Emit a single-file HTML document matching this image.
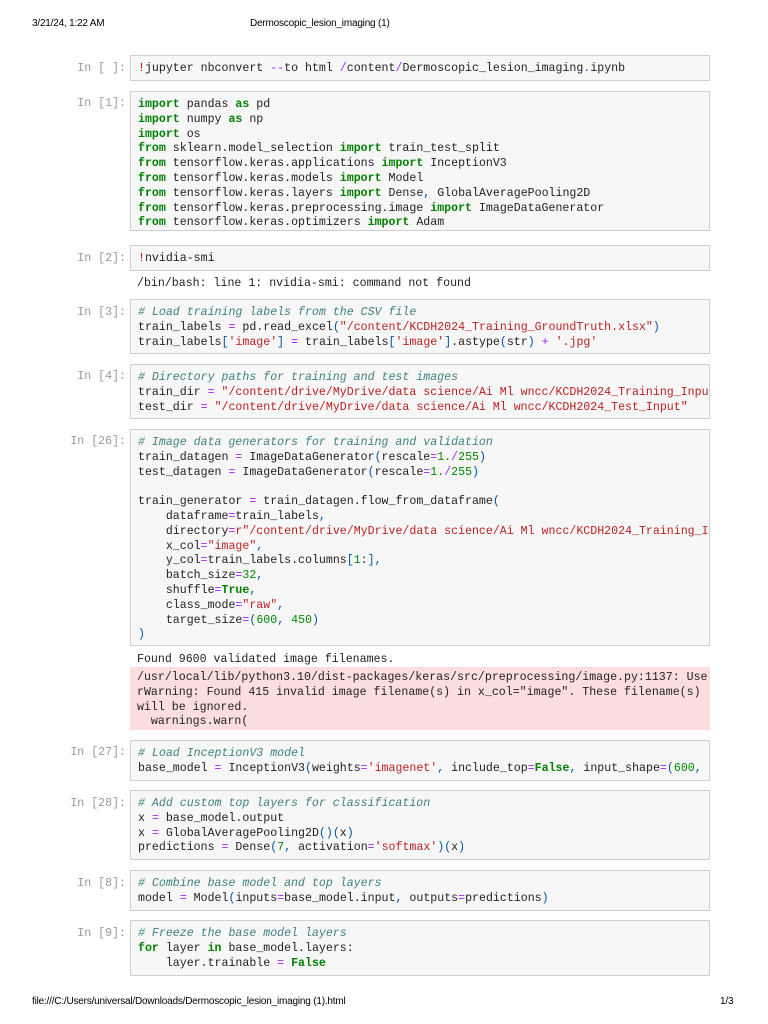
<!DOCTYPE html>
<html><head><meta charset="utf-8"><style>
*{margin:0;padding:0;box-sizing:border-box}
body{width:768px;height:1024px;background:#fff;position:relative;overflow:hidden;font-family:"Liberation Mono",monospace}
.hd{position:absolute;font-family:"Liberation Sans",sans-serif;font-size:10px;color:#000;letter-spacing:-0.2px}
.pr{position:absolute;right:642px;font-size:11.6px;color:#9a9a9a;line-height:14.8px;white-space:pre;margin-top:2px}
.box{position:absolute;left:130px;width:580px;background:#f7f7f7;border:1px solid #cfcfcf;overflow:hidden;padding:6px 7px 1px}
pre{font-family:"Liberation Mono",monospace;font-size:11.6px;line-height:14.8px;color:#222;white-space:pre}
.out{position:absolute;left:130px;width:580px;padding:0 7px;margin-top:2px}
.err{background:#fddede;padding:4px 7px 2px;margin-top:0}
.k{color:#008000;font-weight:bold}.c{color:#408080;font-style:italic}.s{color:#BA2121}.n{color:#008800}.o{color:#AA22FF}.p{color:#0055AA}.e{color:#e00}
</style></head><body>
<div class="hd" style="left:32px;top:18px">3/21/24, 1:22 AM</div>
<div class="hd" style="left:250px;top:18px">Dermoscopic_lesion_imaging (1)</div>

<div class="pr" style="top:60px">In [ ]:</div>
<div class="box" style="top:55px;height:26px"><pre><span class="e">!</span>jupyter nbconvert <span class="o">--</span>to html <span class="o">/</span>content<span class="o">/</span>Dermoscopic_lesion_imaging<span class="o">.</span>ipynb</pre></div>

<div class="pr" style="top:95px">In [1]:</div>
<div class="box" style="top:91px;height:140px"><pre><span class="k">import</span> pandas <span class="k">as</span> pd
<span class="k">import</span> numpy <span class="k">as</span> np
<span class="k">import</span> os
<span class="k">from</span> sklearn.model_selection <span class="k">import</span> train_test_split
<span class="k">from</span> tensorflow.keras.applications <span class="k">import</span> InceptionV3
<span class="k">from</span> tensorflow.keras.models <span class="k">import</span> Model
<span class="k">from</span> tensorflow.keras.layers <span class="k">import</span> Dense<span class="p">,</span> GlobalAveragePooling2D
<span class="k">from</span> tensorflow.keras.preprocessing.image <span class="k">import</span> ImageDataGenerator
<span class="k">from</span> tensorflow.keras.optimizers <span class="k">import</span> Adam</pre></div>

<div class="pr" style="top:250px">In [2]:</div>
<div class="box" style="top:245px;height:26px"><pre><span class="e">!</span>nvidia-smi</pre></div>
<div class="out" style="top:275px"><pre>/bin/bash: line 1: nvidia-smi: command not found</pre></div>

<div class="pr" style="top:304px">In [3]:</div>
<div class="box" style="top:299px;height:55px"><pre><span class="c"># Load training labels from the CSV file</span>
train_labels <span class="o">=</span> pd.read_excel<span class="p">(</span><span class="s">"/content/KCDH2024_Training_GroundTruth.xlsx"</span><span class="p">)</span>
train_labels<span class="p">[</span><span class="s">'image'</span><span class="p">]</span> <span class="o">=</span> train_labels<span class="p">[</span><span class="s">'image'</span><span class="p">]</span>.astype<span class="p">(</span>str<span class="p">)</span> <span class="o">+</span> <span class="s">'.jpg'</span></pre></div>

<div class="pr" style="top:368px">In [4]:</div>
<div class="box" style="top:364px;height:55px"><pre><span class="c"># Directory paths for training and test images</span>
train_dir <span class="o">=</span> <span class="s">"/content/drive/MyDrive/data science/Ai Ml wncc/KCDH2024_Training_Input"</span>
test_dir <span class="o">=</span> <span class="s">"/content/drive/MyDrive/data science/Ai Ml wncc/KCDH2024_Test_Input"</span></pre></div>

<div class="pr" style="top:433px">In [26]:</div>
<div class="box" style="top:429px;height:217px"><pre><span class="c"># Image data generators for training and validation</span>
train_datagen <span class="o">=</span> ImageDataGenerator<span class="p">(</span>rescale<span class="o">=</span><span class="n">1.</span><span class="o">/</span><span class="n">255</span><span class="p">)</span>
test_datagen <span class="o">=</span> ImageDataGenerator<span class="p">(</span>rescale<span class="o">=</span><span class="n">1.</span><span class="o">/</span><span class="n">255</span><span class="p">)</span>

train_generator <span class="o">=</span> train_datagen.flow_from_dataframe<span class="p">(</span>
    dataframe<span class="o">=</span>train_labels<span class="p">,</span>
    directory<span class="o">=</span><span class="s">r"/content/drive/MyDrive/data science/Ai Ml wncc/KCDH2024_Training_Input"</span><span class="p">,</span>
    x_col<span class="o">=</span><span class="s">"image"</span><span class="p">,</span>
    y_col<span class="o">=</span>train_labels.columns<span class="p">[</span><span class="n">1</span>:<span class="p">],</span>
    batch_size<span class="o">=</span><span class="n">32</span><span class="p">,</span>
    shuffle<span class="o">=</span><span class="k">True</span><span class="p">,</span>
    class_mode<span class="o">=</span><span class="s">"raw"</span><span class="p">,</span>
    target_size<span class="o">=</span><span class="p">(</span><span class="n">600</span><span class="p">,</span> <span class="n">450</span><span class="p">)</span>
<span class="p">)</span></pre></div>
<div class="out" style="top:651px"><pre>Found 9600 validated image filenames.</pre></div>
<div class="out err" style="top:667px;height:63px"><pre>/usr/local/lib/python3.10/dist-packages/keras/src/preprocessing/image.py:1137: Use
rWarning: Found 415 invalid image filename(s) in x_col="image". These filename(s)
will be ignored.
  warnings.warn(</pre></div>

<div class="pr" style="top:744px">In [27]:</div>
<div class="box" style="top:740px;height:41px"><pre><span class="c"># Load InceptionV3 model</span>
base_model <span class="o">=</span> InceptionV3<span class="p">(</span>weights<span class="o">=</span><span class="s">'imagenet'</span><span class="p">,</span> include_top<span class="o">=</span><span class="k">False</span><span class="p">,</span> input_shape<span class="o">=</span><span class="p">(</span><span class="n">600</span><span class="p">,</span> <span class="n">450</span><span class="p">,</span> <span class="n">3</span><span class="p">))</span></pre></div>

<div class="pr" style="top:795px">In [28]:</div>
<div class="box" style="top:790px;height:70px"><pre><span class="c"># Add custom top layers for classification</span>
x <span class="o">=</span> base_model.output
x <span class="o">=</span> GlobalAveragePooling2D<span class="p">()(</span>x<span class="p">)</span>
predictions <span class="o">=</span> Dense<span class="p">(</span><span class="n">7</span><span class="p">,</span> activation<span class="o">=</span><span class="s">'softmax'</span><span class="p">)(</span>x<span class="p">)</span></pre></div>

<div class="pr" style="top:875px">In [8]:</div>
<div class="box" style="top:870px;height:41px"><pre><span class="c"># Combine base model and top layers</span>
model <span class="o">=</span> Model<span class="p">(</span>inputs<span class="o">=</span>base_model.input<span class="p">,</span> outputs<span class="o">=</span>predictions<span class="p">)</span></pre></div>

<div class="pr" style="top:925px">In [9]:</div>
<div class="box" style="top:920px;height:56px"><pre><span class="c"># Freeze the base model layers</span>
<span class="k">for</span> layer <span class="k">in</span> base_model.layers:
    layer.trainable <span class="o">=</span> <span class="k">False</span></pre></div>

<div class="hd" style="left:32px;top:996px">file:///C:/Users/universal/Downloads/Dermoscopic_lesion_imaging (1).html</div>
<div class="hd" style="left:720px;top:996px">1/3</div>
</body></html>
